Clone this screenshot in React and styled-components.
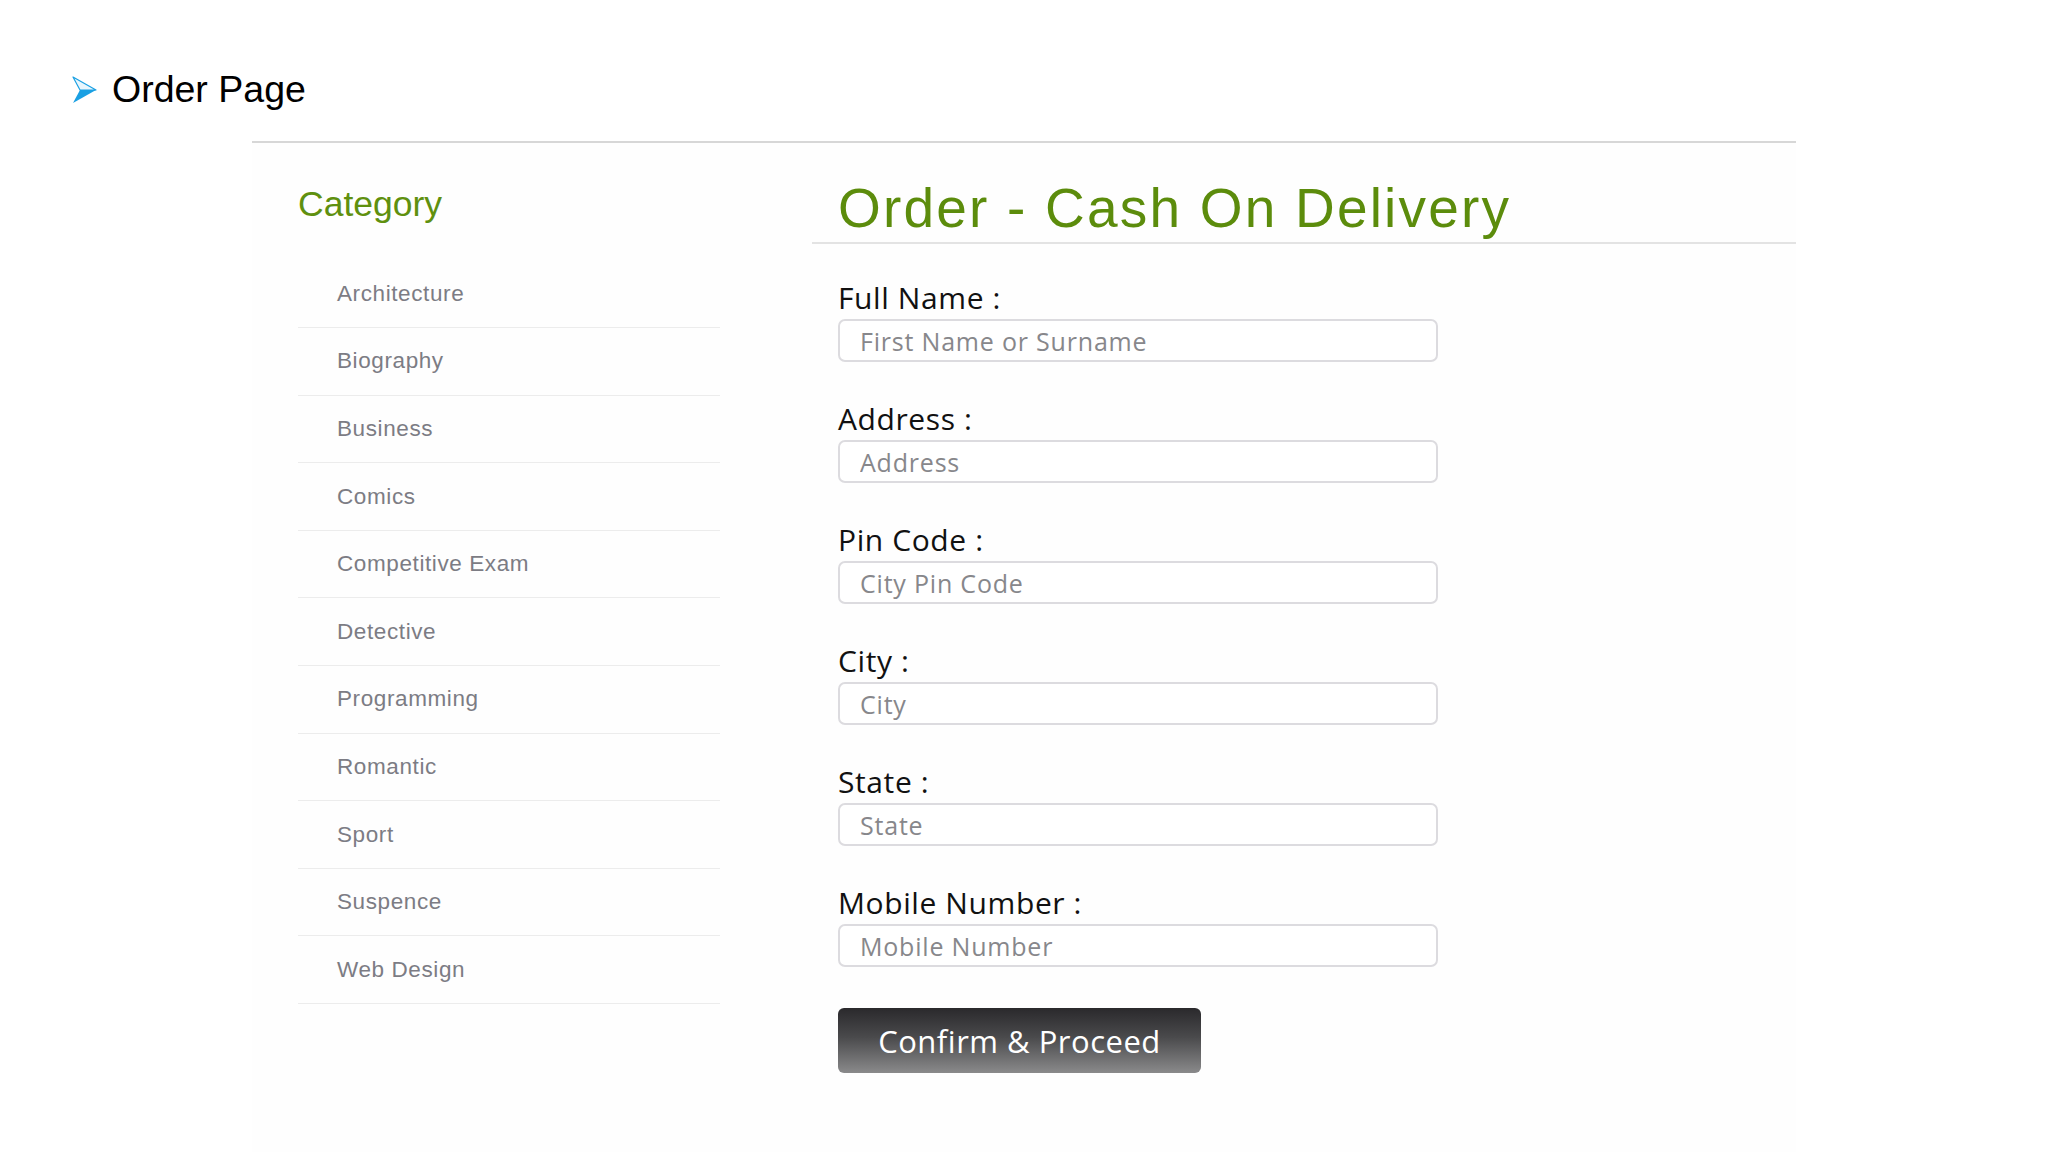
import styled, { createGlobalStyle } from "styled-components";

const GlobalStyle = createGlobalStyle`
  body {
    margin: 0;
    background: #ffffff;
    font-family: "Liberation Sans", Arial, sans-serif;
  }
  * { box-sizing: border-box; }
`;

const Page = styled.div`
  width: 2048px;
  height: 1152px;
  overflow: hidden;
  background: #ffffff;
`;

const SlideTitle = styled.div`
  display: flex;
  align-items: flex-start;
  gap: 15px;
  padding: 71px 0 0 72px;
  height: 141px;
`;

const Arrow = styled.svg`
  width: 25px;
  height: 28px;
  margin-top: 5px;
  flex: none;
`;

const SlideText = styled.h1`
  margin: 0;
  font-family: "Liberation Sans", Arial, sans-serif;
  font-weight: normal;
  font-size: 37.5px;
  line-height: 1;
  color: #000;
`;

const Rule = styled.hr`
  margin: 0 auto;
  width: 1544px;
  border: none;
  border-top: 2px solid #d7d7d7;
`;

const Layout = styled.div`
  width: 1544px;
  min-height: 1009px;
  margin: 0 auto;
  display: grid;
  grid-template-columns: 560px 984px;
  align-items: start;
  background: #fefefe;
`;

const Sidebar = styled.aside`
  padding: 44px 0 0 46px;
`;

const SideTitle = styled.h2`
  margin: 0;
  font-weight: normal;
  font-size: 35.5px;
  line-height: 1;
  color: #5f900f;
`;

const CategoryList = styled.ul`
  list-style: none;
  margin: 38px 0 0;
  padding: 0;
  width: 422px;
`;

const CategoryItem = styled.li`
  height: 67.6px;
  display: flex;
  align-items: center;
  padding-left: 39px;
  border-bottom: 1.5px solid #ececec;
  font-size: 22.5px;
  letter-spacing: 0.6px;
  color: #7c7c84;
`;

const Main = styled.main`
  padding-top: 38px;
`;

const Heading = styled.h2`
  margin: 0;
  padding: 0 0 6px 26px;
  border-bottom: 2px solid #e3e3e3;
  font-weight: normal;
  font-size: 55px;
  letter-spacing: 2.2px;
  line-height: 1;
  color: #5c8c0c;
`;

const Form = styled.form`
  padding: 39px 0 0 26px;
  display: flex;
  flex-direction: column;
  gap: 42px;
`;

const Field = styled.div`
  display: flex;
  flex-direction: column;
  gap: 6px;
`;

const Label = styled.label`
  font-family: "Open Sans", sans-serif;
  font-size: 30px;
  letter-spacing: 0.6px;
  line-height: 1;
  color: #111;
`;

const Input = styled.input`
  width: 600px;
  height: 43px;
  padding: 0 0 0 20px;
  border: 2px solid #dcdbdf;
  border-radius: 7px;
  background: #fff;
  font-family: "Open Sans", sans-serif;
  font-size: 25px;
  letter-spacing: 0.8px;
  color: #333;
  outline: none;
  &::placeholder { color: #87878b; }
`;

const Button = styled.button`
  margin-top: -1px;
  width: 363px;
  height: 65px;
  border: none;
  border-radius: 6px;
  background: linear-gradient(#2a292c, #4a4a4c 45%, #8a8a8b);
  color: #fff;
  font-family: "Open Sans", sans-serif;
  font-size: 31px;
  letter-spacing: 0.5px;
  cursor: pointer;
`;

const categories = [
  "Architecture",
  "Biography",
  "Business",
  "Comics",
  "Competitive Exam",
  "Detective",
  "Programming",
  "Romantic",
  "Sport",
  "Suspence",
  "Web Design",
];

const fields = [
  ["Full Name :", "First Name or Surname"],
  ["Address :", "Address"],
  ["Pin Code :", "City Pin Code"],
  ["City :", "City"],
  ["State :", "State"],
  ["Mobile Number :", "Mobile Number"],
];

export default function App() {
  return (
    <Page>
      <GlobalStyle />
      <SlideTitle>
        <Arrow viewBox="0 0 25 28">
          <polygon points="1,1 24,14 8,14" fill="#e8f6fd" stroke="#1aa0e3" strokeWidth="1.2" strokeLinejoin="round" />
          <polygon points="8,14 24,14 1,27" fill="#1aa0e3" />
        </Arrow>
        <SlideText>Order Page</SlideText>
      </SlideTitle>
      <Rule />
      <Layout>
        <Sidebar>
          <SideTitle>Category</SideTitle>
          <CategoryList>
            {categories.map((c) => (
              <CategoryItem key={c}>{c}</CategoryItem>
            ))}
          </CategoryList>
        </Sidebar>
        <Main>
          <Heading>Order - Cash On Delivery</Heading>
          <Form onSubmit={(e) => e.preventDefault()}>
            {fields.map(([label, ph]) => (
              <Field key={label}>
                <Label>{label}</Label>
                <Input placeholder={ph} />
              </Field>
            ))}
            <div>
              <Button type="submit">Confirm &amp; Proceed</Button>
            </div>
          </Form>
        </Main>
      </Layout>
    </Page>
  );
}
